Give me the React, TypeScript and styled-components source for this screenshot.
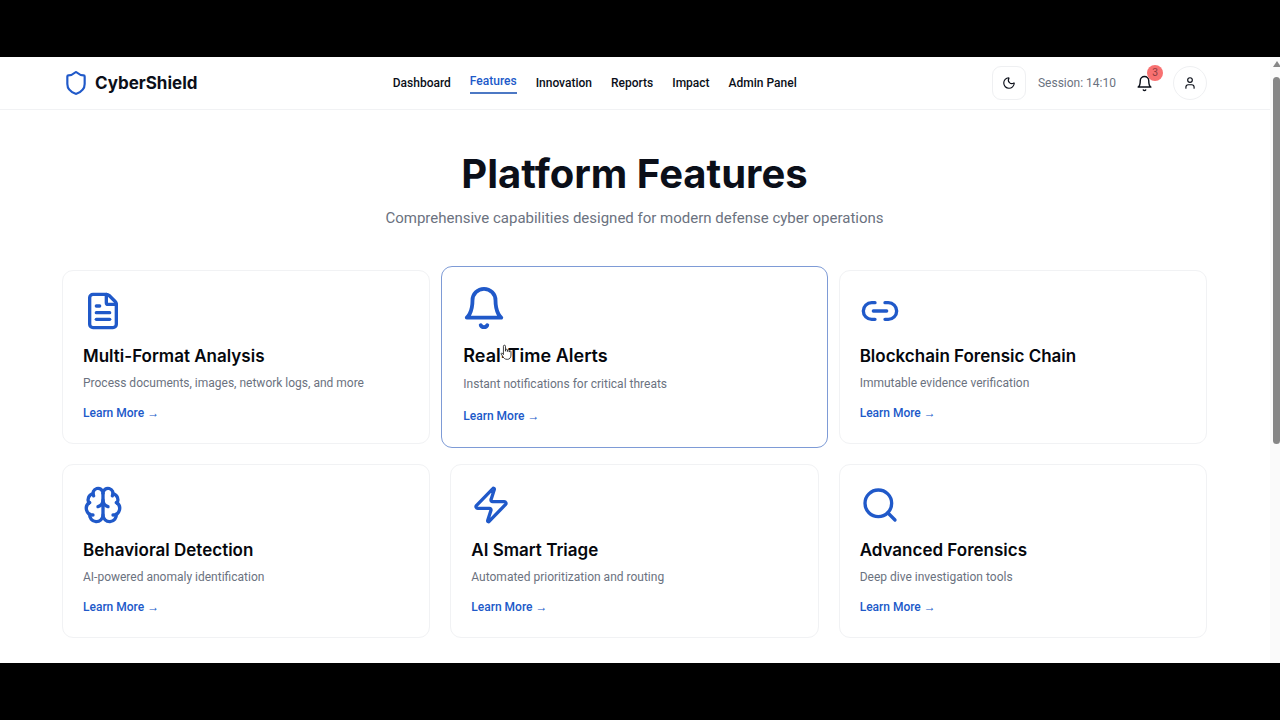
import React from "react";
import styled, { createGlobalStyle } from "styled-components";
import { Brain, FileText, Link2, Moon, Search, Shield, User, Zap } from "lucide-react";

const GlobalStyle = createGlobalStyle`
  *, *::before, *::after { box-sizing: border-box; }
  body { margin: 0; background: #000; font-family: Roboto, sans-serif; color: #0b0f19; }
  h1, h2, p { margin: 0; }
`;

const blue = "#2059c9";

const Letterbox = styled.div`
  height: 100vh;
  padding: 57px 0;
  background: #000;
`;

const Viewport = styled.div`
  display: flex;
  height: 100%;
  overflow: hidden;
  background: #fff;
`;

const Page = styled.div`
  flex: 1;
  min-width: 0;
`;

const ScrollTrack = styled.div`
  display: flex;
  flex-direction: column;
  align-items: center;
  gap: 10px;
  width: 10px;
  padding: 4px 0 0 3px;
  background: #fafafa;
`;

const ScrollArrow = styled.svg`
  display: block;
  width: 8px;
  height: 6px;
  flex: none;
`;

const ScrollThumb = styled.div`
  width: 7px;
  height: 61%;
  border-radius: 4px;
  background: #868686;
`;

const Header = styled.header`
  display: flex;
  align-items: center;
  justify-content: space-between;
  height: 53px;
  padding: 0 63px;
  border-bottom: 1px solid #f1f2f4;
`;

const Brand = styled.a`
  display: flex;
  align-items: center;
  gap: 6px;
  color: #0b0f19;
  font: 700 17px/24px Inter, sans-serif;
  text-decoration: none;
`;

const Nav = styled.nav`
  display: flex;
  align-items: center;
  gap: 19px;
`;

const NavLink = styled.a<{ $active?: boolean }>`
  color: ${(p) => (p.$active ? blue : "#0b0f19")};
  font-size: 12px;
  line-height: 17px;
  font-weight: 500;
  text-decoration: none;
  padding-bottom: ${(p) => (p.$active ? "2px" : "0")};
  border-bottom: ${(p) => (p.$active ? "2px solid #4c78c4" : "0")};
`;

const Tools = styled.div`
  display: flex;
  align-items: center;
  justify-content: flex-end;
  gap: 12px;
`;

const IconButton = styled.button<{ $round?: boolean }>`
  display: flex;
  align-items: center;
  justify-content: center;
  width: 34px;
  height: 34px;
  padding: 0;
  border: 1px solid #eff0f2;
  border-radius: ${(p) => (p.$round ? "50%" : "9px")};
  background: #fff;
  color: #0b0f19;
`;

const Session = styled.span`
  color: #6b7280;
  font-size: 12px;
  line-height: 17px;
`;

const AlertButton = styled.button`
  position: relative;
  display: flex;
  padding: 0;
  margin: 0 8px;
  border: 0;
  background: none;
  color: #0b0f19;
`;

const Badge = styled.span`
  position: absolute;
  top: -10px;
  right: -10px;
  width: 16px;
  height: 16px;
  border-radius: 50%;
  background: #f87171;
  color: #8c3b3f;
  font-size: 10px;
  line-height: 16px;
  text-align: center;
`;

const Main = styled.main`
  padding: 37px 63px 0 62px;
`;

const Intro = styled.div`
  display: flex;
  flex-direction: column;
  align-items: center;
  gap: 5px;
  margin-bottom: 40px;
  text-align: center;
`;

const Title = styled.h1`
  font: 700 40px/54px Inter, sans-serif;
`;

const Subtitle = styled.p`
  color: #6b7280;
  font-size: 15px;
  line-height: 24px;
`;

const Grid = styled.div`
  display: grid;
  grid-template-columns: repeat(3, 1fr);
  grid-auto-rows: 174px;
  gap: 20px;
`;

const Card = styled.article<{ $raised?: boolean }>`
  display: flex;
  flex-direction: column;
  align-items: flex-start;
  position: relative;
  margin: ${(p) => (p.$raised ? "-4px -9px" : "0")};
  padding: ${(p) => (p.$raised ? "20px 21px" : "20px")};
  border: 1px solid ${(p) => (p.$raised ? "#7e9bd6" : "#f1f2f4")};
  border-radius: 11px;
  background: #fff;
`;

const CardIcon = styled.div<{ $raised?: boolean }>`
  margin: ${(p) => (p.$raised ? "-2px" : "0")};
  color: ${blue};
  svg {
    display: block;
    width: ${(p) => (p.$raised ? "46px" : "40px")};
    height: ${(p) => (p.$raised ? "46px" : "40px")};
  }
`;

const CardTitle = styled.h2<{ $raised?: boolean }>`
  margin-top: ${(p) => (p.$raised ? "15px" : "13px")};
  color: #05070d;
  font-family: Inter, sans-serif;
  font-size: ${(p) => (p.$raised ? "18px" : "17px")};
  line-height: 24px;
  font-weight: 600;
`;

const CardText = styled.p<{ $raised?: boolean }>`
  margin-top: ${(p) => (p.$raised ? "8px" : "7px")};
  color: #6b7280;
  font-size: 12px;
  line-height: 17px;
`;

const LearnMore = styled.a<{ $raised?: boolean }>`
  margin-top: ${(p) => (p.$raised ? "15px" : "13px")};
  color: ${blue};
  font-size: 12px;
  line-height: 17px;
  font-weight: 500;
  text-decoration: none;
`;

const Pointer = styled.svg`
  position: absolute;
  top: 77px;
  left: 58px;
  width: 12px;
  height: 17px;
`;

const BellIcon = ({ size = 24 }: { size?: number }) => (
  <svg width={size} height={size} viewBox="0 0 24 24" fill="none" stroke="currentColor" strokeWidth="2" strokeLinecap="round" strokeLinejoin="round" aria-hidden="true">
    <path d="M6 8a6 6 0 0 1 12 0c0 7 3 9 3 9H3s3-2 3-9" />
    <path d="M10.3 21a1.94 1.94 0 0 0 3.4 0" />
  </svg>
);

const HandPointer = () => (
  <Pointer viewBox="0 0 14 19" aria-hidden="true">
    <path
      d="M4 12V2.2a1.2 1.2 0 0 1 2.4 0V8V6.8a1.1 1.1 0 0 1 2.2 0V8.4V7.4a1.1 1.1 0 0 1 2.2 0V9V8.6a1 1 0 0 1 2 0V12.5c0 3-1.5 5-4.3 5C5.5 17.5 4.5 16 3.2 14L1.4 11.4c-.5-.9.6-1.6 1.3-1z"
      fill="#fff"
      stroke="#222"
      strokeWidth="1"
      strokeLinejoin="round"
    />
  </Pointer>
);

const navItems = ["Dashboard", "Features", "Innovation", "Reports", "Impact", "Admin Panel"];

const features = [
  { title: "Multi-Format Analysis", text: "Process documents, images, network logs, and more", Icon: FileText },
  { title: "Real-Time Alerts", text: "Instant notifications for critical threats", Icon: BellIcon, raised: true },
  { title: "Blockchain Forensic Chain", text: "Immutable evidence verification", Icon: Link2 },
  { title: "Behavioral Detection", text: "AI-powered anomaly identification", Icon: Brain },
  { title: "AI Smart Triage", text: "Automated prioritization and routing", Icon: Zap },
  { title: "Advanced Forensics", text: "Deep dive investigation tools", Icon: Search },
];

export default function App() {
  return (
    <Letterbox>
      <GlobalStyle />
      <Viewport>
        <Page>
          <Header>
            <Brand href="#">
              <Shield size={26} color={blue} />
              CyberShield
            </Brand>
            <Nav>
              {navItems.map((item) => (
                <NavLink key={item} href="#" $active={item === "Features"}>
                  {item}
                </NavLink>
              ))}
            </Nav>
            <Tools>
              <IconButton aria-label="Toggle theme">
                <Moon size={14} />
              </IconButton>
              <Session>Session: 14:10</Session>
              <AlertButton aria-label="Notifications">
                <BellIcon size={17} />
                <Badge>3</Badge>
              </AlertButton>
              <IconButton $round aria-label="Account">
                <User size={14} />
              </IconButton>
            </Tools>
          </Header>
          <Main>
            <Intro>
              <Title>Platform Features</Title>
              <Subtitle>Comprehensive capabilities designed for modern defense cyber operations</Subtitle>
            </Intro>
            <Grid>
              {features.map(({ title, text, Icon, raised }) => (
                <Card key={title} $raised={raised}>
                  <CardIcon $raised={raised}>
                    <Icon />
                  </CardIcon>
                  <CardTitle $raised={raised}>{title}</CardTitle>
                  <CardText $raised={raised}>{text}</CardText>
                  <LearnMore href="#" $raised={raised}>
                    Learn More →
                  </LearnMore>
                  {raised && <HandPointer />}
                </Card>
              ))}
            </Grid>
          </Main>
        </Page>
        <ScrollTrack>
          <ScrollArrow viewBox="0 0 8 6" aria-hidden="true">
            <path d="M4 0L8 6H0Z" fill="#868686" />
          </ScrollArrow>
          <ScrollThumb />
        </ScrollTrack>
      </Viewport>
    </Letterbox>
  );
}
